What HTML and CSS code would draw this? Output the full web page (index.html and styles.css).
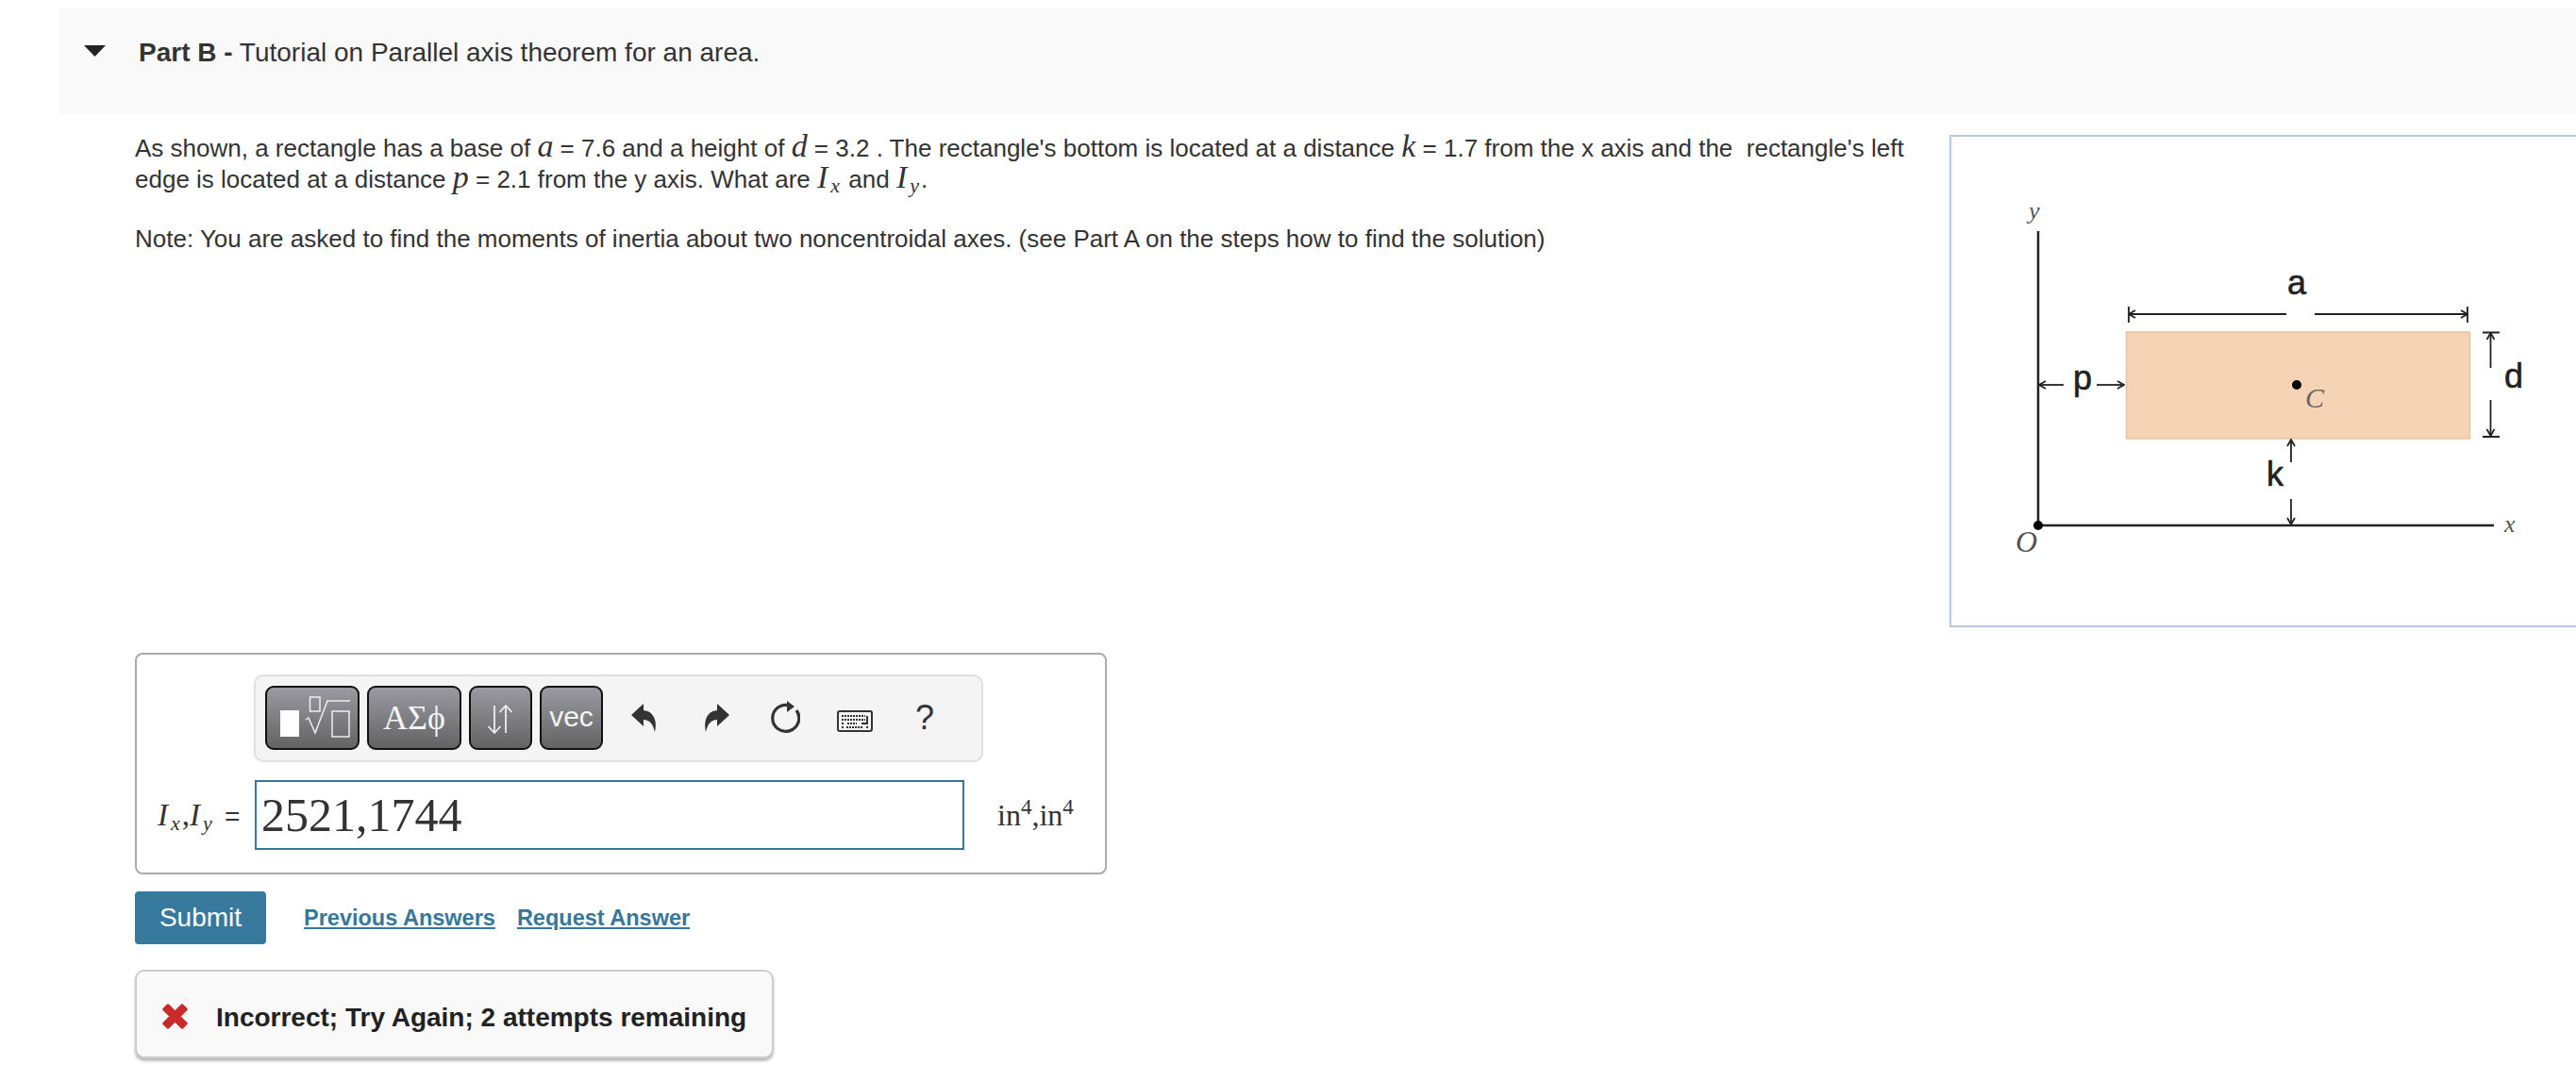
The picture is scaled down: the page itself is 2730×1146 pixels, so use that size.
FILE: index.html
```html
<!DOCTYPE html>
<html lang="en">
<head>
<meta charset="utf-8">
<title>Part B</title>
<link rel="stylesheet" href="styles.css">
</head>
<body>
<div class="page">
  <header class="part-header">
    <svg class="caret" viewBox="0 0 23 12"><path d="M0 0H23L11.500 12Z"/></svg>
    <h2 class="part-title"><b>Part B -</b> Tutorial on Parallel axis theorem for an area.</h2>
  </header>
  <div class="content">
    <main class="main">
      <p class="para">As shown, a rectangle has a base of <i class="m">a</i> = 7.6 and a height of <i class="m">d</i> = 3.2 . The rectangle's bottom is located at a distance <i class="m">k</i> = 1.7 from the x axis and the &nbsp;rectangle's left<br>edge is located at a distance <i class="m">p</i> = 2.1 from the y axis. What are <i class="m">I<sub>x</sub></i> and <i class="m">I<sub>y</sub></i>.</p>
      <p class="para note">Note: You are asked to find the moments of inertia about two noncentroidal axes. (see Part A on the steps how to find the solution)</p>

      <section class="panel">
        <div class="toolbar">
          <div class="tbtn w1">
            <svg viewBox="2 2 96 64" class="ticon"><rect x="16" y="26" width="20" height="28" fill="#fff"/><g fill="none" stroke="#eee" stroke-width="1.500"><rect x="47.500" y="12" width="10.500" height="15"/><path d="M43 36l3 -2 7 16 13 -34h24"/><rect x="71" y="27" width="18" height="27"/></g></svg>
          </div>
          <div class="tbtn w1 serif">ΑΣϕ</div>
          <div class="tbtn w2">
            <svg viewBox="2 2 63 64" class="ticon"><g fill="none" stroke="#eee" stroke-width="1.800"><path d="M27 21V50M20.500 43l6.500 7 6.500-7"/><path d="M39 50V21M32.500 28l6.500-7 6.500 7"/></g></svg>
          </div>
          <div class="tbtn w2 vec">vec</div>
          <svg class="ic undo" viewBox="0 0 27 30"><path d="M0 12 13 0V7C23 8 28 17 25 30 23 22 20 17 13 17V24Z"/></svg>
          <svg class="ic redo" viewBox="0 0 27 30"><path d="M27 12 14 0V7C4 8 -1 17 2 30 4 22 7 17 14 17V24Z"/></svg>
          <svg class="ic reload" viewBox="0 0 32 36"><path d="M21 5A14 14 0 1 0 28 10" fill="none" stroke="#333" stroke-width="3.200"/><path d="M18 0 26 6 18 12Z" fill="#333"/></svg>
          <svg class="ic keyboard" viewBox="0 0 38 23"><rect x="1" y="1" width="36" height="21" rx="2" fill="none" stroke="#333" stroke-width="2"/><path d="M5 6h25M5 10h25M5 14h3M11 14h10M5 18h2M10 18h18M31 18h2" stroke="#333" stroke-width="2" stroke-dasharray="2 1" fill="none"/><path d="M32 6v8h-6" stroke="#333" stroke-width="2" fill="none"/></svg>
          <span class="help">?</span>
        </div>
        <div class="answer-row">
          <span class="label"><i>I<sub>x</sub></i>,<i>I<sub>y</sub></i> <span class="eq">=</span></span>
          <div class="input">2521,1744</div>
          <span class="units">in<sup>4</sup>,in<sup>4</sup></span>
        </div>
      </section>

      <div class="actions">
        <button class="submit" type="button">Submit</button>
        <a class="link" href="#">Previous Answers</a>
        <a class="link" href="#">Request Answer</a>
      </div>

      <div class="feedback">
        <svg class="cross" viewBox="0 0 27 27"><path d="M6 1.500 13.500 9 21 1.500 25.500 6 18 13.500 25.500 21 21 25.500 13.500 18 6 25.500 1.500 21 9 13.500 1.500 6Z"/></svg>
        <span>Incorrect; Try Again; 2 attempts remaining</span>
      </div>
    </main>

    <figure class="figure">
      <svg class="diagram" viewBox="0 0 664 520">
        <defs>
          <marker id="ah" viewBox="0 0 10 10" refX="9" refY="5" markerWidth="10" markerHeight="10" orient="auto-start-reverse" markerUnits="userSpaceOnUse"><path d="M2 1 9 5 2 9" fill="none" stroke="#222" stroke-width="1.800"/></marker>
        </defs>
        <rect class="plate" x="187.500" y="209" width="364" height="113"/>
        <path class="axis" d="M94 102V414H577"/>
        <circle cx="94" cy="414" r="5"/>
        <circle cx="368" cy="265" r="5"/>
        <g class="dim">
          <path d="M190 182V199M549 182V199"/>
          <path d="M190 190H357" marker-start="url(#ah)"/>
          <path d="M387 190H549" marker-end="url(#ah)"/>
          <path d="M565 209.500H583M565 320H583"/>
          <path d="M573.500 247V210" marker-end="url(#ah)"/>
          <path d="M573.500 281V319" marker-end="url(#ah)"/>
          <path d="M121 265H95" marker-end="url(#ah)"/>
          <path d="M156 265H185" marker-end="url(#ah)"/>
          <path d="M362 347V323" marker-end="url(#ah)"/>
          <path d="M362 386V413" marker-end="url(#ah)"/>
        </g>
        <text class="lbl" x="368" y="169" text-anchor="middle">a</text>
        <text class="lbl" x="588" y="268">d</text>
        <text class="lbl" x="131" y="270">p</text>
        <text class="lbl" x="336" y="372">k</text>
        <text class="ital c" x="377" y="289">C</text>
        <text class="ital" x="84" y="88.500">y</text>
        <text class="ital big" x="70" y="442">O</text>
        <text class="ital" x="588" y="421">x</text>
      </svg>
    </figure>
  </div>
</div>
</body>
</html>
```
FILE: styles.css
```css
* { box-sizing: border-box; }
html, body { margin: 0; padding: 0; background: #fff; }
body { font-family: "Liberation Sans", Arial, sans-serif; font-size: 26px; color: #333; }
.page { width: 2730px; height: 1146px; padding: 8px 0 0 62px; overflow: hidden; }

.part-header { height: 113px; background: #f9f9f9; display: flex; align-items: flex-start; padding: 40px 0 0 27px; gap: 35px; }
.caret { width: 23px; height: 12px; flex: none; fill: #222; }
.part-title { margin: -8px 0 0; font-size: 28px; line-height: 32px; font-weight: 400; color: #333; }
.part-title b { font-weight: 700; }

.content { display: flex; padding-top: 22px; }
.main { flex: none; width: 2004px; padding-left: 81px; }
.para { margin: -2px 0 0; font-size: 26px; line-height: 33px; white-space: nowrap; }
.note { margin-top: 30px; margin-bottom: 422px; }
.m { font-family: "Liberation Serif", serif; font-size: 34px; font-style: italic; line-height: 0; }
.m sub { font-size: 22px; line-height: 0; vertical-align: -5px; margin-left: 3px; margin-right: 2px; }

.panel { width: 1030px; height: 235px; border: 2px solid #aaa; border-radius: 8px; padding: 21px 0 0 0; }
.toolbar { margin-left: 124px; width: 773px; height: 93px; background: #f4f4f4; border: 2px solid #e0e0e0; border-radius: 10px; display: flex; align-items: center; padding: 0 0 1px 10px; gap: 8px; }
.tbtn { height: 68px; border: 2px solid #111; border-radius: 9px; background: linear-gradient(#9b9aa2, #636363); color: #f4f4f4; display: flex; align-items: center; justify-content: center; flex: none; }
.w1 { width: 100px; }
.w2 { width: 67px; }
.serif { font-family: "Liberation Serif", serif; font-size: 36px; }
.vec { font-size: 30px; padding-bottom: 3px; }
.ticon { height: 64px; width: 96px; flex: none; }
.w2 .ticon { width: 63px; }
.ic { flex: none; fill: #333; }
.undo { width: 27px; height: 30px; margin-left: 22px; }
.redo { width: 27px; height: 30px; margin-left: 42px; }
.reload { width: 32px; height: 36px; margin-left: 35px; }
.keyboard { width: 38px; height: 23px; margin-left: 31px; margin-top: 6px; }
.help { margin-left: 37px; font-size: 36px; color: #333; }

.answer-row { display: flex; align-items: center; margin-top: 19px; padding-left: 22px; }
.label { width: 103px; font-family: "Liberation Serif", serif; font-size: 33px; white-space: nowrap; flex: none; }
.label sub { font-size: 22px; line-height: 0; vertical-align: -5px; margin-left: 3px; margin-right: 2px; }
.eq { font-family: "Liberation Sans", sans-serif; font-size: 28px; margin-left: 3px; }
.input { width: 752px; height: 74px; border: 2px solid #367899; font-family: "Liberation Serif", serif; font-size: 50px; line-height: 70px; padding-left: 5px; flex: none; }
.units { margin-left: 35px; font-family: "Liberation Serif", serif; font-size: 32px; }
.units sup { font-size: 23px; line-height: 0; }

.actions { display: flex; align-items: center; margin-top: 18px; }
.submit { width: 139px; height: 56px; border: 0; border-radius: 4px; background: #37799c; color: #fff; font-family: "Liberation Sans", sans-serif; font-size: 28px; padding: 0; }
.link { font-size: 23.500px; font-weight: 700; color: #367899; text-decoration: underline; margin-left: 40px; }
.link + .link { margin-left: 23px; }

.feedback { width: 677px; height: 94px; margin-top: 27px; border: 2px solid #ccc; border-radius: 10px; background: #f9f9f9; box-shadow: 0 3px 3px #bbb; display: flex; align-items: center; padding: 8px 0 0 27px; gap: 30px; font-size: 28px; font-weight: 700; color: #222; white-space: nowrap; }
.cross { width: 27px; height: 27px; flex: none; fill: #c92a2a; stroke: #c92a2a; stroke-width: 2.500; stroke-linejoin: round; margin-top: -3px; }

.figure { flex: none; width: 664px; height: 522px; margin: 0; border: 2px solid #b9c7dc; border-right: 0; }
.diagram { display: block; width: 664px; height: 520px; margin: -2px 0 0 -2px; }
.plate { fill: #f6d3b5; stroke: #eac3a0; stroke-width: 1.500; }
.axis { fill: none; stroke: #222; stroke-width: 2.500; }
.dim path { fill: none; stroke: #222; stroke-width: 1.800; }
.lbl { font-size: 36px; fill: #222; stroke: #222; stroke-width: .6px; }
.ital { font-family: "Liberation Serif", serif; font-style: italic; font-size: 26px; fill: #555; }
.big { font-size: 32px; }
.c { font-size: 30px; fill: #666; }
```
